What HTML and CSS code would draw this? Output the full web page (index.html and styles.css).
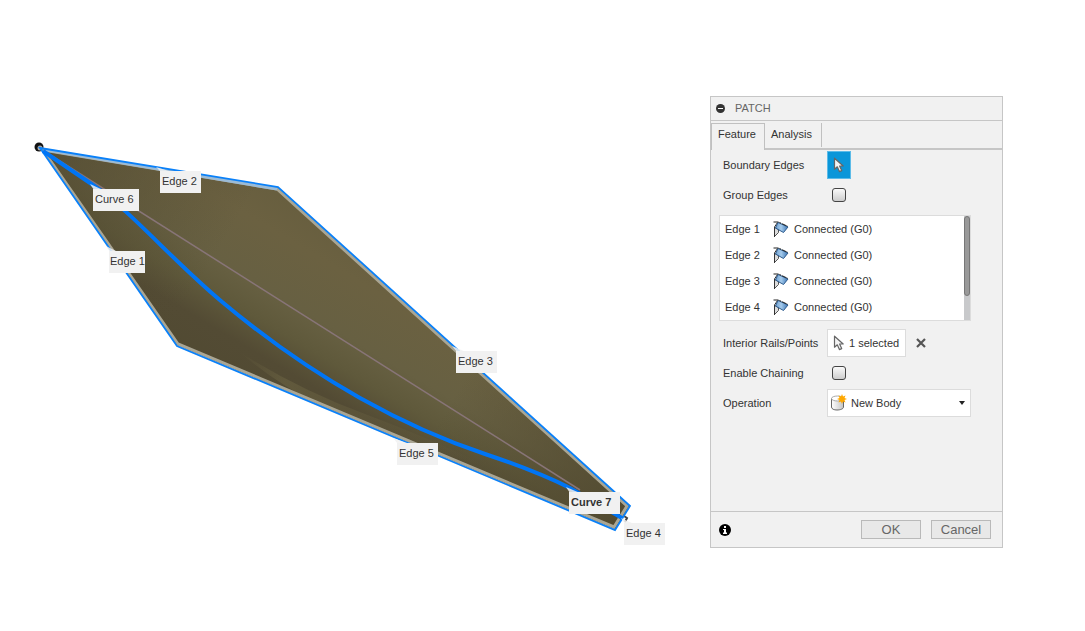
FILE: index.html
```html
<!DOCTYPE html>
<html lang="en">
<head>
    <meta charset="UTF-8">
    <meta name="viewport" content="width=device-width, initial-scale=1.0">
    <title>Patch</title>
    <link rel="stylesheet" href="styles.css">
</head>
<body>
    <!-- Shared icons -->
    <svg class="icon-defs" width="0" height="0" aria-hidden="true">
        <defs>
            <linearGradient id="steel" x1="0" y1="0" x2="1" y2="0">
                <stop offset="0" stop-color="#6f9fd0"/>
                <stop offset="0.45" stop-color="#a5cbec"/>
                <stop offset="1" stop-color="#3a74b4"/>
            </linearGradient>
            <linearGradient id="body-fill" x1="0" y1="0" x2="1" y2="0">
                <stop offset="0" stop-color="#ffffff"/>
                <stop offset="1" stop-color="#c4c4c4"/>
            </linearGradient>
        </defs>
        <symbol id="cursor" viewBox="0 0 12 16">
            <path d="M1.5 1.2V12.2L4.3 9.8L6.4 14.6L8.7 13.6L6.6 9H10.2Z" fill="#f4f4f4" stroke="#666" stroke-width="1.2" stroke-linejoin="round"/>
        </symbol>
        <symbol id="connected" viewBox="0 0 16 17">
            <path d="M1.500 6.500L5.500 8.500V11.500L1.500 15.500Z" fill="#dcdcdc" stroke="#555" stroke-width="1"/>
            <path d="M1.500 16V6L4.500 1.500" fill="none" stroke="#333" stroke-width="1"/>
            <path d="M5 1.500L15 6L10.500 11.500L2.500 7Z" fill="url(#steel)" stroke="#2c5a8c" stroke-width="1"/>
            <path d="M0.500 1H5.500L15 5.500" fill="none" stroke="#222" stroke-width="1" stroke-dasharray="5 1 2 1"/>
        </symbol>
    </svg>

    <main class="viewport">
        <svg class="model" viewBox="0 0 710 631" role="img" aria-label="Patched surface">
            <defs>
                <linearGradient id="surface" gradientUnits="userSpaceOnUse" x1="260" y1="410" x2="370" y2="225">
                    <stop offset="0" stop-color="#514a32"/>
                    <stop offset="0.22" stop-color="#534b34"/>
                    <stop offset="0.36" stop-color="#5f593b"/>
                    <stop offset="0.5" stop-color="#676042"/>
                    <stop offset="0.75" stop-color="#6b6141"/>
                    <stop offset="1" stop-color="#665d3e"/>
                </linearGradient>
                <linearGradient id="shade" gradientUnits="userSpaceOnUse" x1="39" y1="147" x2="630" y2="506">
                    <stop offset="0" stop-color="#50482f" stop-opacity="0.7"/>
                    <stop offset="0.3" stop-color="#50482f" stop-opacity="0"/>
                    <stop offset="0.7" stop-color="#50482f" stop-opacity="0"/>
                    <stop offset="1" stop-color="#50482f" stop-opacity="0.9"/>
                </linearGradient>
                <linearGradient id="streak" gradientUnits="userSpaceOnUse" x1="240" y1="350" x2="480" y2="468">
                    <stop offset="0" stop-color="#675f40" stop-opacity="0"/>
                    <stop offset="0.2" stop-color="#675f40" stop-opacity="0.7"/>
                    <stop offset="1" stop-color="#675f40" stop-opacity="0"/>
                </linearGradient>
            </defs>

            <!-- Anchor points -->
            <circle cx="39" cy="147" r="4.500" fill="#111"/>
            <circle cx="40" cy="148" r="2.500" fill="#aaa"/>
            <path d="M624 516L627 518L625 522" fill="none" stroke="#444" stroke-width="2"/>

            <!-- Surface -->
            <path d="M41 149L278 188L629 506L615 529L177 345Z" fill="url(#surface)"/>
            <path d="M41 149L278 188L629 506L615 529L177 345Z" fill="url(#shade)"/>
            <path d="M241 353Q300 390 365 414T500 472Q400 440 320 405Q275 383 241 353Z" fill="url(#streak)"/>
            <path d="M44 151L580 490" stroke="#887578" stroke-width="1.500"/>
            <path d="M43 150L277 189L627 506L614 527L178 344Z" fill="none" stroke="#aaa694" stroke-width="3"/>
            <path d="M46 150L277 189" stroke="#9bbbd6" stroke-width="3"/>
            <path d="M40 148L278 187L630 506L615 530L177 346Z" fill="none" stroke="#0a80f8" stroke-width="1.800"/>

            <!-- Rail curve -->
            <path d="M43 151L93 185C132 212 170 258 221 301C265 338 310 370 360 398C401 421 440 439 485 454C530 469 550 478 570 488L622 518" fill="none" stroke="#0075f5" stroke-width="4"/>

            <g class="tag">
                <path d="M156 167L161 172H172Z"/>
                <rect x="160" y="171" width="41" height="22"/>
                <text x="162" y="185">Edge 2</text>
            </g>
            <g class="tag">
                <path d="M90 184L94 190H103Z"/>
                <rect x="93" y="189" width="46" height="22"/>
                <text x="95" y="203">Curve 6</text>
            </g>
            <g class="tag">
                <path d="M106 246L110 252H118Z"/>
                <rect x="109" y="251" width="36" height="22"/>
                <text x="110" y="265">Edge 1</text>
            </g>
            <g class="tag">
                <path d="M452 346L457 352H466Z"/>
                <rect x="456" y="351" width="41" height="22"/>
                <text x="458" y="365">Edge 3</text>
            </g>
            <g class="tag">
                <path d="M393 438L398 444H410Z"/>
                <rect x="397" y="443" width="41" height="22"/>
                <text x="399" y="457">Edge 5</text>
            </g>
            <g class="tag">
                <path d="M621 518L625 524H634Z"/>
                <rect x="624" y="523" width="41" height="22"/>
                <text x="626" y="537">Edge 4</text>
            </g>
            <g class="tag tag-active">
                <path d="M566 487L570 493H580Z"/>
                <rect x="569" y="492" width="51" height="22"/>
                <text x="571" y="506">Curve 7</text>
            </g>
        </svg>
    </main>

    <form class="panel" onsubmit="return false">
        <header class="panel-header">
            <svg width="9" height="9" viewBox="0 0 9 9" aria-hidden="true">
                <circle cx="4.500" cy="4.500" r="4.500" fill="#333"/>
                <rect x="2" y="4" width="5" height="1" fill="#fff"/>
            </svg>
            <h1>PATCH</h1>
        </header>

        <div class="tabs" role="tablist">
            <button type="button" class="tab active" role="tab" aria-selected="true">Feature</button>
            <button type="button" class="tab" role="tab" aria-selected="false">Analysis</button>
        </div>

        <div class="panel-body">
            <div class="row">
                <span class="name">Boundary Edges</span>
                <button type="button" class="pick-btn" aria-label="Select boundary edges">
                    <svg width="12" height="16"><use href="#cursor"/></svg>
                </button>
            </div>
            <div class="row">
                <label class="name" for="groupEdges">Group Edges</label>
                <input type="checkbox" id="groupEdges">
            </div>

            <div class="edge-list">
                <table>
                    <tr>
                        <td class="edge">Edge 1</td>
                        <td class="link-icon"><svg width="16" height="17"><use href="#connected"/></svg></td>
                        <td>Connected (G0)</td>
                    </tr>
                    <tr>
                        <td class="edge">Edge 2</td>
                        <td class="link-icon"><svg width="16" height="17"><use href="#connected"/></svg></td>
                        <td>Connected (G0)</td>
                    </tr>
                    <tr>
                        <td class="edge">Edge 3</td>
                        <td class="link-icon"><svg width="16" height="17"><use href="#connected"/></svg></td>
                        <td>Connected (G0)</td>
                    </tr>
                    <tr>
                        <td class="edge">Edge 4</td>
                        <td class="link-icon"><svg width="16" height="17"><use href="#connected"/></svg></td>
                        <td>Connected (G0)</td>
                    </tr>
                </table>
                <div class="scroll-track"><div class="scroll-thumb"></div></div>
            </div>

            <div class="row">
                <span class="name">Interior Rails/Points</span>
                <button type="button" class="selected-btn">
                    <svg width="12" height="16"><use href="#cursor"/></svg>
                    1 selected
                </button>
                <button type="button" class="clear-btn" aria-label="Clear selection">
                    <svg width="10" height="10" viewBox="0 0 10 10"><path d="M1 1L9 9M9 1L1 9" stroke="#555" stroke-width="2.200"/></svg>
                </button>
            </div>
            <div class="row">
                <label class="name" for="chaining">Enable Chaining</label>
                <input type="checkbox" id="chaining">
            </div>
            <div class="row">
                <label class="name" for="operation">Operation</label>
                <div class="select-box">
                    <select id="operation">
                        <option>New Body</option>
                    </select>
                    <svg class="body-icon" width="17" height="17" viewBox="0 0 17 17" aria-hidden="true">
                        <path d="M1.500 4V13C1.500 15 4 16 7 16S13.500 15 13.500 13V4" fill="url(#body-fill)" stroke="#666" stroke-width="1"/>
                        <ellipse cx="7.500" cy="4.500" rx="6" ry="2.500" fill="#fff" stroke="#aaa" stroke-width="1"/>
                        <path d="M12 0L13 2.500L15.500 1.500L14.500 4L17 5L14.500 6L15.500 8.500L13 7.500L12 10L11 7.500L8.500 8.500L9.500 6L7 5L9.500 4L8.500 1.500L11 2.500Z" fill="#ffa800"/>
                    </svg>
                    <svg class="arrow" width="6" height="4" viewBox="0 0 6 4" aria-hidden="true"><path d="M0 0H6L3 4Z" fill="#222"/></svg>
                </div>
            </div>
        </div>

        <footer class="panel-footer">
            <button type="button" class="info-btn" aria-label="Info">
                <svg width="12" height="12" viewBox="0 0 12 12">
                    <circle cx="6" cy="6" r="6" fill="#000"/>
                    <path d="M5 2H7V4H5ZM4 5H7V8.500H8V10H4V8.500H5V6H4Z" fill="#fff"/>
                </svg>
            </button>
            <button type="submit" class="btn">OK</button>
            <button type="button" class="btn">Cancel</button>
        </footer>
    </form>
</body>
</html>
```
FILE: styles.css
```css
* {
    box-sizing: border-box;
}

body {
    margin: 0;
    min-height: 100vh;
    display: flex;
    align-items: flex-start;
    background-color: #fff;
    color: #333;
    font-family: "Liberation Sans", Arial, sans-serif;
    font-size: 11px;
    line-height: 14px;
}

button,
select {
    padding: 0;
    font: inherit;
    color: inherit;
}

svg {
    display: block;
    flex: none;
}

.icon-defs {
    position: absolute;
}

/* Model view */
.viewport {
    flex: 1;
    min-width: 0;
}

.model {
    width: 100%;
    height: auto;
}

.tag rect {
    fill: #f1f1f1;
}

.tag path {
    fill: #f1f1f1;
    fill-opacity: 0.85;
}

.tag text {
    fill: #333;
}

.tag-active text {
    font-weight: bold;
}

/* Dialog */
.panel {
    display: flex;
    flex-direction: column;
    width: 293px;
    min-height: 452px;
    margin: 96px 82px 0 0;
    background-color: #f1f1f1;
    border: 1px solid #c6c6c6;
}

.panel-header {
    display: flex;
    align-items: center;
    gap: 10px;
    height: 24px;
    padding: 0 5px;
    border-bottom: 1px solid #c6c6c6;
}

.panel-header h1 {
    margin: 0;
    font-size: 11px;
    font-weight: normal;
    line-height: 13px;
    color: #666;
}

/* Tabs */
.tabs {
    display: flex;
    height: 29px;
    padding-top: 2px;
    box-shadow: inset 0 -2px #c6c6c6;
}

.tab {
    height: 24px;
    padding: 0 9px 2px 6px;
    background: none;
    border: 0;
    border-right: 1px solid #c0c0c0;
}

.tab.active {
    height: 27px;
    padding: 0 8px 6px 6px;
    background-color: #f1f1f1;
    border-top: 1px solid #c0c0c0;
    border-left: 1px solid #c0c0c0;
}

/* Rows */
.panel-body {
    flex: 1;
}

.row {
    display: flex;
    align-items: center;
    height: 30px;
    padding-left: 12px;
}

.name {
    width: 104px;
}

.pick-btn {
    display: flex;
    align-items: center;
    justify-content: center;
    width: 24px;
    height: 28px;
    background-color: #0a96d9;
    border: 1px solid #5cbbe8;
}

input[type="checkbox"] {
    appearance: none;
    width: 14px;
    height: 14px;
    margin: 0 5px;
    background-image: linear-gradient(#fafafa, #cdcdcd);
    border: 1px solid #444;
    border-radius: 3px;
}

/* Edge list */
.edge-list {
    display: flex;
    justify-content: space-between;
    margin: 5px 31px 7px 8px;
    background-color: #fff;
    border: 1px solid #dcdcdc;
}

table {
    border-collapse: collapse;
}

td {
    height: 26px;
    padding: 0;
}

.edge {
    width: 53px;
    padding-left: 5px;
}

.link-icon {
    width: 21px;
}

.scroll-track {
    width: 6px;
    background-color: #c8c9cb;
}

.scroll-thumb {
    height: 80px;
    background-color: #999;
    border: 1px solid #777;
    border-radius: 3px;
}

/* Selection field */
.selected-btn {
    display: flex;
    align-items: center;
    gap: 4px;
    width: 79px;
    height: 28px;
    padding-left: 5px;
    background-color: #fff;
    border: 1px solid #dcdcdc;
    white-space: nowrap;
}

.clear-btn {
    margin-left: 10px;
    background: none;
    border: 0;
}

/* Drop-down */
.select-box {
    position: relative;
    width: 144px;
}

select {
    display: block;
    appearance: none;
    width: 100%;
    height: 28px;
    padding-left: 23px;
    background-color: #fff;
    border: 1px solid #dcdcdc;
    border-radius: 0;
}

.body-icon {
    position: absolute;
    top: 5px;
    left: 3px;
    pointer-events: none;
}

.arrow {
    position: absolute;
    top: 12px;
    right: 6px;
    pointer-events: none;
}

/* Footer */
.panel-footer {
    display: flex;
    align-items: center;
    gap: 10px;
    height: 36px;
    padding: 0 11px 0 8px;
    border-top: 1px solid #c6c6c6;
}

.info-btn {
    margin-right: auto;
    background: none;
    border: 0;
}

.btn {
    width: 60px;
    height: 19px;
    background-color: #e8e8e8;
    border: 1px solid #b9b9b9;
    color: #666;
    font-size: 13px;
}
```
